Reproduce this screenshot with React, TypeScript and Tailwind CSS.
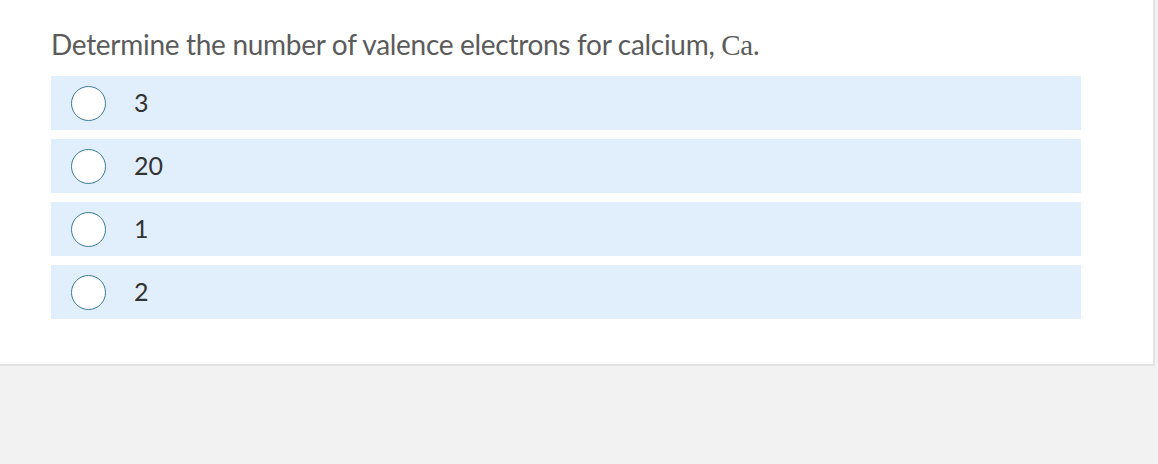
export default function App() {
  const options = ['3', '20', '1', '2'];

  return (
    <div className="min-h-[464px] w-[1158px] bg-[#f2f2f2]">
      {/* question card */}
      <div className="w-[1155px] h-[366px] bg-white border-r-2 border-b-2 border-[#e3e3e3] pl-[51px] pr-[72px] pt-[24px]">
        <h1 className="text-[28px] leading-[40px] text-[#5b5b5b] font-['Lato',sans-serif] tracking-[-0.3px]">
          Determine the number of valence electrons for calcium,{' '}
          <span className="font-['Liberation_Serif',serif] text-[29px]">Ca</span>.
        </h1>

        <div className="mt-[11px] flex flex-col gap-[9px]">
          {options.map((opt) => (
            <label
              key={opt}
              className="flex h-[54px] items-center bg-[#e1effd] pl-[20px]"
            >
              <span className="h-[35px] w-[35px] rounded-full border border-[#3c7a96] bg-white" />
              <span className="ml-[28px] text-[25px] text-[#333333] font-['Lato',sans-serif]">
                {opt}
              </span>
            </label>
          ))}
        </div>
      </div>
    </div>
  );
}
